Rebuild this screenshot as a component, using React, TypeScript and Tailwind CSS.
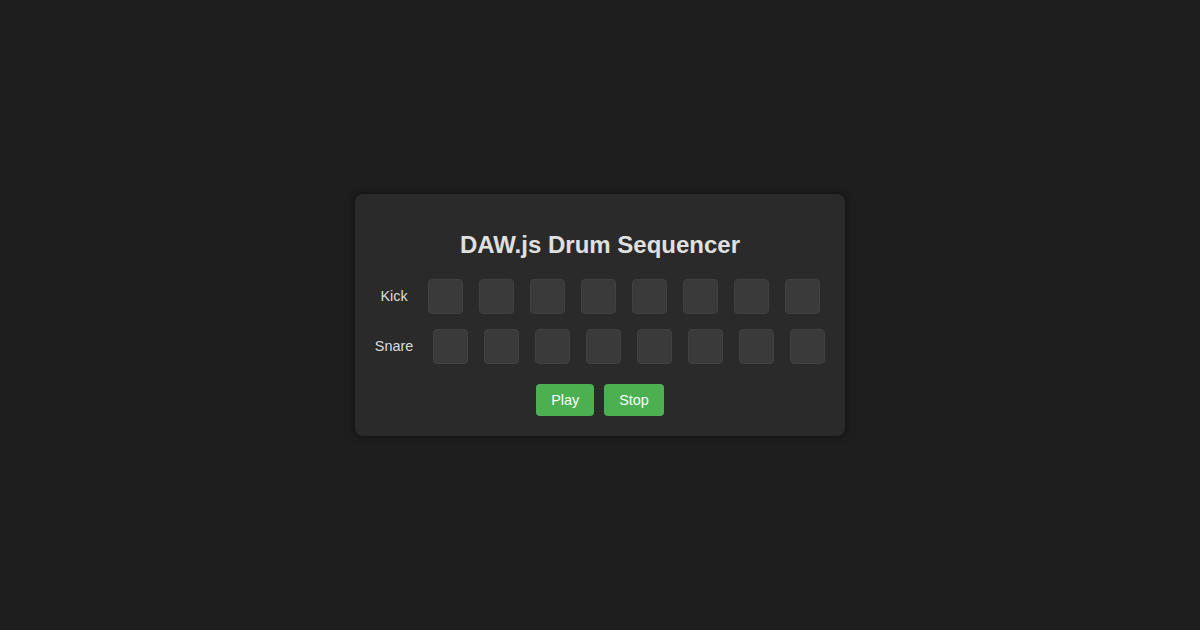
import React from "react";

const steps = Array.from({ length: 8 }, (_, i) => i);
const tracks = ["Kick", "Snare"];

function Row({ name }: { name: string }) {
  return (
    <div className="flex items-center justify-center">
      <span className="mr-5 text-[14.4px] leading-[17px] text-[#dddddd]">{name}</span>
      <div className="flex gap-4">
        {steps.map((i) => (
          <div
            key={i}
            className="h-[35px] w-[35px] rounded-[4px] border border-[#404040] bg-[#3a3a3a]"
          />
        ))}
      </div>
    </div>
  );
}

export default function App() {
  return (
    <div
      className="flex h-[630px] w-full items-center justify-center bg-[#1e1e1e]"
      style={{ fontFamily: '"Liberation Sans", Arial, sans-serif' }}
    >
      <div className="flex w-[490px] flex-col rounded-lg bg-[#2a2a2a] p-5 shadow-[0_0_10px_rgba(0,0,0,0.5)]">
        <h1 className="mb-5 mt-[17px] text-center text-2xl leading-[28px] font-bold text-[#e0e0e0]">
          DAW.js Drum Sequencer
        </h1>
        <div className="flex flex-col gap-[15px]">
          {tracks.map((t) => (
            <Row key={t} name={t} />
          ))}
        </div>
        <div className="mt-5 flex justify-center gap-[10px]">
          <button className="rounded-[4px] bg-[#4caf50] px-[15px] py-2 text-[14.4px] leading-[16px] text-white">
            Play
          </button>
          <button className="rounded-[4px] bg-[#4caf50] px-[15px] py-2 text-[14.4px] leading-[16px] text-white">
            Stop
          </button>
        </div>
      </div>
    </div>
  );
}
